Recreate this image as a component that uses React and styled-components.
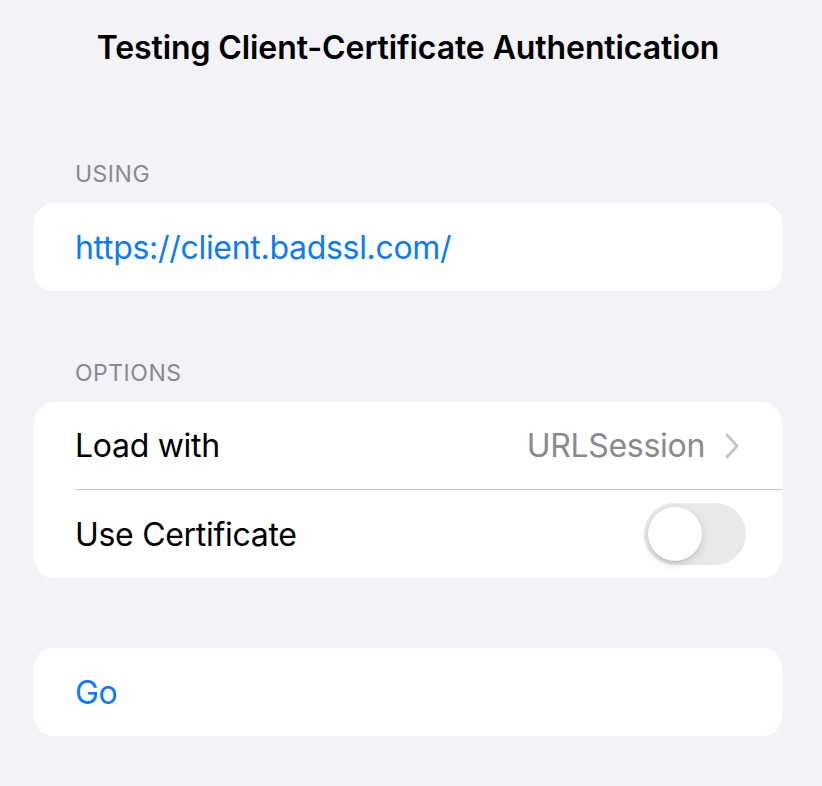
import React, { useState } from 'react'
import styled, { createGlobalStyle } from 'styled-components'

const GlobalStyle = createGlobalStyle`
  html, body {
    margin: 0;
    padding: 0;
    background: #f2f2f7;
    font-family: Inter, "Noto Sans", sans-serif;
    -webkit-font-smoothing: antialiased;
  }
`

function Chevron() {
  return (
    <ChevronIcon width="16" height="26" viewBox="0 0 16 26" fill="none">
      <path d="M3 2 L13 13 L3 24" stroke="#c4c4c7" strokeWidth="2.8" strokeLinecap="round" strokeLinejoin="round" />
    </ChevronIcon>
  )
}

export default function App() {
  const [useCert, setUseCert] = useState(false)

  return (
    <Page>
      <GlobalStyle />
      <Title>Testing Client-Certificate Authentication</Title>

      <Section top="91px">
        <SectionHeader>USING</SectionHeader>
        <Card>
          <Row>
            <LinkText>https://client.badssl.com/</LinkText>
          </Row>
        </Card>
      </Section>

      <Section top="68px">
        <SectionHeader>OPTIONS</SectionHeader>
        <Card>
          <Row divider>
            <Label>Load with</Label>
            <Value>
              URLSession
              <Chevron />
            </Value>
          </Row>
          <Row>
            <Label>Use Certificate</Label>
            <Toggle on={useCert} onClick={() => setUseCert(!useCert)}>
              <Knob on={useCert} />
            </Toggle>
          </Row>
        </Card>
      </Section>

      <Section top="70px">
        <Card>
          <Row>
            <LinkText>Go</LinkText>
          </Row>
        </Card>
      </Section>
    </Page>
  )
}

const Page = styled.div`
  width: 822px;
  height: 786px;
  box-sizing: border-box;
  padding: 0 40px 0 34px;
  display: flex;
  flex-direction: column;
`

const Title = styled.h1`
  margin: 0;
  padding-top: 29px;
  padding-left: 0;
  height: 69px;
  box-sizing: border-box;
  text-align: center;
  font-size: 32px;
  line-height: 38px;
  font-weight: 600;
  letter-spacing: -0.1px;
  color: #000;
`

const Section = styled.div`
  margin-top: ${props => props.top};
`

const SectionHeader = styled.div`
  padding: 0 0 15px 41px;
  font-size: 23px;
  color: #8a8a8e;
  letter-spacing: 0.5px;
  line-height: 28px;
`

const Card = styled.div`
  background: #fff;
  border-radius: 20px;
  overflow: hidden;
`

const Row = styled.div`
  height: 88px;
  display: flex;
  align-items: center;
  justify-content: space-between;
  margin-left: 41px;
  padding-right: 36px;
  box-sizing: border-box;
  border-bottom: ${props => (props.divider ? '1px solid #c6c6c8' : 'none')};
`

const Label = styled.span`
  font-size: 32px;
  color: #000;
  letter-spacing: -0.3px;
`

const LinkText = styled(Label)`
  color: #0a7aff;
`

const Value = styled.span`
  display: flex;
  align-items: center;
  gap: 19px;
  font-size: 32px;
  color: #8a8a8e;
  letter-spacing: -0.3px;
`

const ChevronIcon = styled.svg`
  margin-right: 6px;
`

const Toggle = styled.div`
  width: 102px;
  height: 62px;
  border-radius: 31px;
  background: ${props => (props.on ? '#34c759' : '#e9e9ea')};
  position: relative;
  cursor: pointer;
  transition: background 0.2s;
`

const Knob = styled.div`
  position: absolute;
  top: 4px;
  left: ${props => (props.on ? '44px' : '4px')};
  width: 54px;
  height: 54px;
  border-radius: 50%;
  background: #fff;
  box-shadow: 0 3px 8px rgba(0, 0, 0, 0.15), 0 1px 1px rgba(0, 0, 0, 0.1);
  transition: left 0.2s;
`
